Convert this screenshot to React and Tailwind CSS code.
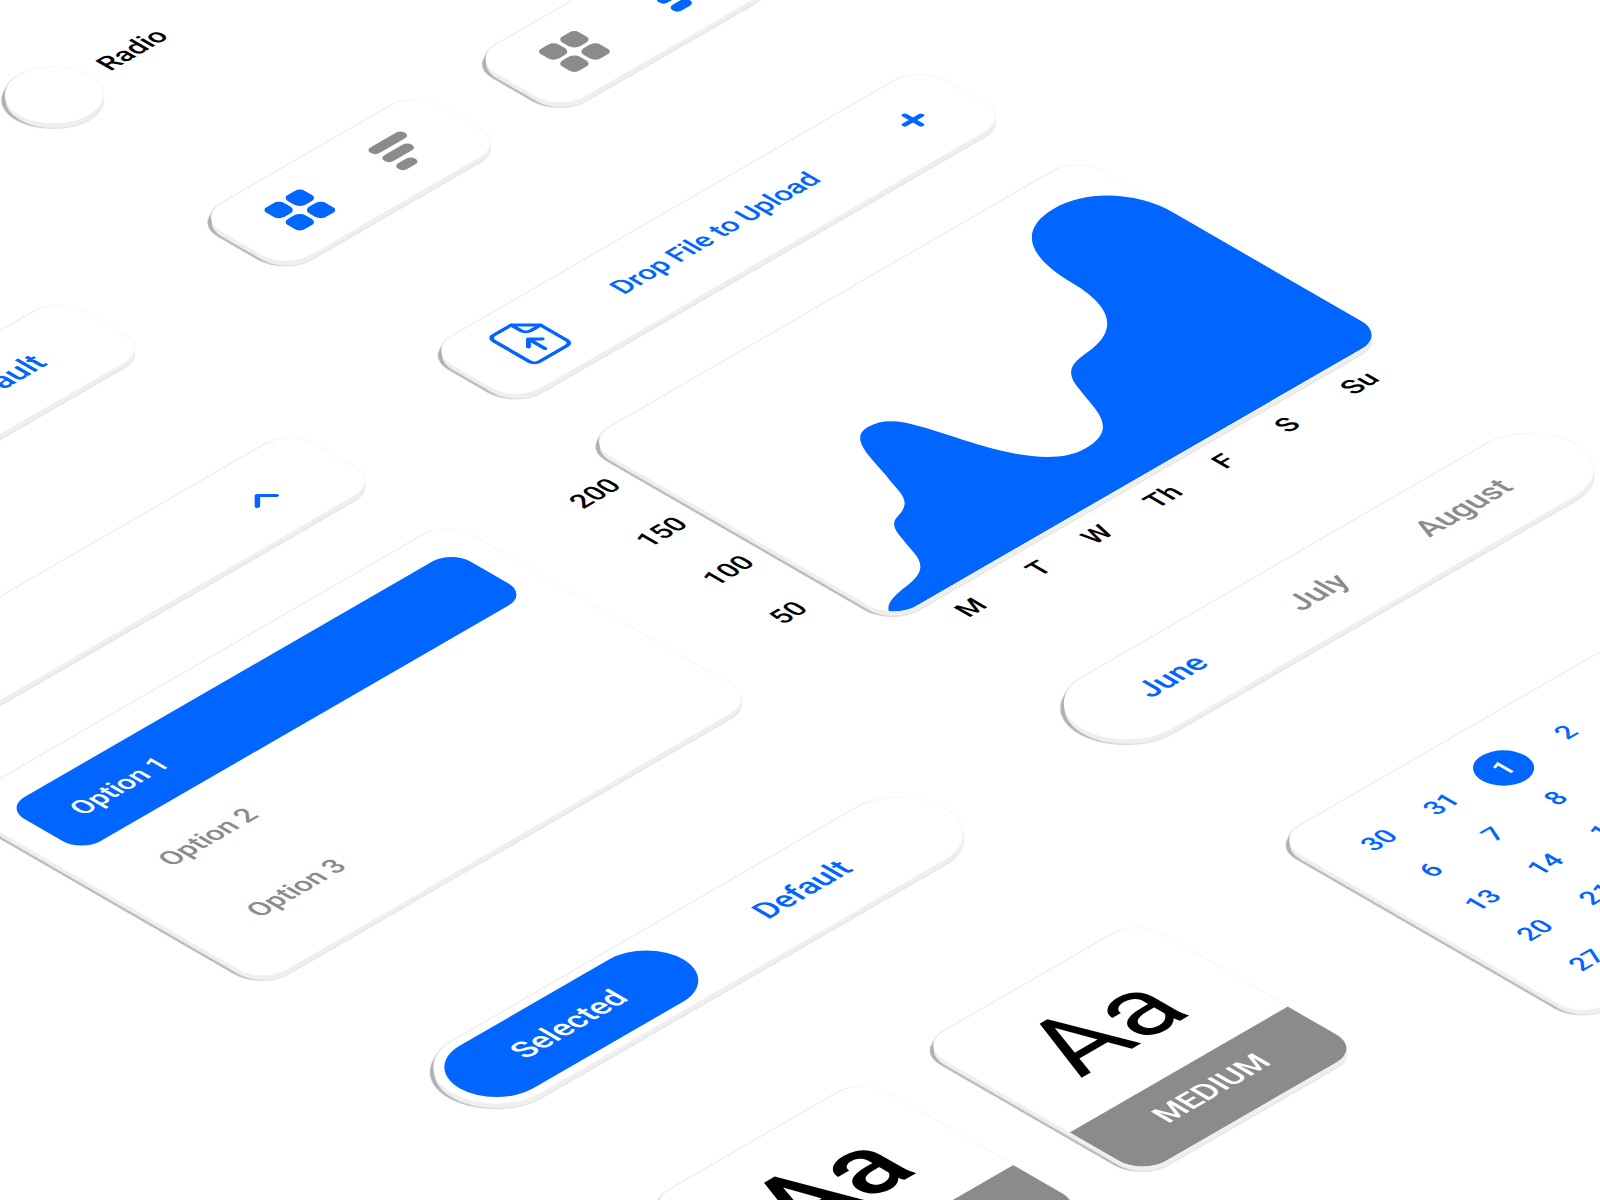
const RAISED =
  "bg-white [box-shadow:-4px_5px_0_#efefef,-5px_6px_1px_#dedede,-7px_3px_1px_#b0b0b0,-1px_-1px_0_#e6e6e6,1px_0_0_#f5f5f5]";

const DAYS = ["M", "T", "W", "Th", "F", "S", "Su"];
const LEVELS = ["200", "150", "100", "50"];
const OPTIONS = ["Option 1", "Option 2", "Option 3"];
const WEEKS = [
  [30, 31, 1, 2, 3, 4, 5],
  [6, 7, 8, 9, 10, 11, 12],
  [13, 14, 15, 16, 17, 18, 19],
  [20, 21, 22, 23, 24, 25, 26],
  [27, 28, 29, 30, 31, 1, 2],
];

function GridIcon() {
  return (
    <svg width="44" height="44" viewBox="0 0 44 44" fill="currentColor" aria-hidden="true">
      <rect x="-.5" y="-.5" width="20.500" height="20.500" rx="7" />
      <rect x="24" y="-.5" width="20.500" height="20.500" rx="7" />
      <rect x="-.5" y="24" width="20.500" height="20.500" rx="7" />
      <rect x="24" y="24" width="20.500" height="20.500" rx="7" />
    </svg>
  );
}

function ListIcon() {
  return (
    <svg width="44" height="44" viewBox="0 0 44 44" fill="currentColor" aria-hidden="true">
      <rect x="2" y="0" width="40" height="11" rx="5.5" />
      <rect x="2" y="16" width="32" height="11" rx="5.5" />
      <rect x="2" y="32" width="20" height="11" rx="5.5" />
    </svg>
  );
}

function FileUpIcon() {
  return (
    <svg
      width="48"
      height="57"
      viewBox="0 0 48 57"
      fill="none"
      stroke="currentColor"
      strokeWidth="4"
      strokeLinecap="round"
      strokeLinejoin="round"
      aria-hidden="true"
    >
      <path d="M29 2H9a6 6 0 0 0-6 6v41a6 6 0 0 0 6 6h31a6 6 0 0 0 6-6V19Z" />
      <path d="M29 2v11a6 6 0 0 0 6 6h11" />
      <path d="M25 45V26M17 34l8-8 8 8" />
    </svg>
  );
}

function PlusIcon() {
  return (
    <svg width="24" height="24" viewBox="0 0 24 24" fill="none" stroke="currentColor" strokeWidth="5" strokeLinecap="round" aria-hidden="true">
      <path d="M12 2.500v19M2.500 12h19" />
    </svg>
  );
}

function ChevronUpIcon() {
  return (
    <svg width="28" height="16" viewBox="0 0 28 16" fill="none" stroke="currentColor" strokeWidth="4.5" strokeLinecap="round" strokeLinejoin="round" aria-hidden="true">
      <path d="M3 14 14 3l11 11" />
    </svg>
  );
}

function ViewSwitch({ active }) {
  const on = "text-[#0066ff]";
  const off = "text-[#8b8b8b]";
  return (
    <div className={`flex h-[103px] w-[252px] items-center justify-between rounded-[28px] px-[45px] ${RAISED}`}>
      <button type="button" aria-label="Grid view" className={active === "grid" ? on : off}>
        <GridIcon />
      </button>
      <button type="button" aria-label="List view" className={active === "list" ? on : off}>
        <ListIcon />
      </button>
    </div>
  );
}

function FontCard({ label, weight }) {
  return (
    <article className={`w-[252px] rounded-[28px] ${RAISED}`}>
      <div className="overflow-hidden rounded-[28px]">
        <div className={`flex h-[174px] items-center justify-center pt-1 text-[110px] leading-none text-black ${weight}`}>Aa</div>
        <div className="flex h-[84px] items-center justify-center bg-[#8b8b8b] pb-2 text-[31px] text-white">{label}</div>
      </div>
    </article>
  );
}

function Chart() {
  return (
    <figure className="relative mt-[79px]">
      <ul className="absolute top-[20px] right-full mr-[15px] w-[54px] text-black">
        {LEVELS.map((level) => (
          <li key={level} className="flex h-[77px] items-center">
            {level}
          </li>
        ))}
      </ul>
      <div className={`h-[356px] rounded-[28px] ${RAISED}`}>
        <div className="h-full overflow-hidden rounded-[28px]">
          <svg className="block h-full w-full" viewBox="0 0 569 356" preserveAspectRatio="none" role="img" aria-label="Activity per day">
            <path
              fill="#0066ff"
              d="M2 352C12 328 40 334 58 326C78 317 78 300 86 281C92 262 98 258 106 255.500C132 248 130 232 140 208C150 178 156 149 178 149C204 149 208 176 218 209C228 246 244 296 282 296C322 296 326 264 338 233C346 210 356 203 379 201C414 198 439 176 440 124C440 68 464 38 504 38C544 38 569 72 569 112V356H0Z"
            />
          </svg>
        </div>
      </div>
      <ul className="absolute top-full left-[45px] mt-[17px] grid grid-cols-[82px_64px_72px_79px_72px_76px_40px] leading-8 text-black">
        {DAYS.map((day) => (
          <li key={day}>{day}</li>
        ))}
      </ul>
    </figure>
  );
}

export default function App() {
  return (
    <main className="relative h-screen overflow-hidden bg-white font-['Roboto',sans-serif] text-[27px] font-medium">
      <div className="absolute top-1/2 left-1/2 -ml-[1839px] flex w-[2124px] origin-top-left items-start gap-[159px] pl-[368px] [transform:matrix(0.866,-0.5,0.866,0.5,0,0)]">
        <section className="w-[569px] shrink-0 pt-[331px]">
          <div className={`flex h-[103px] items-center justify-end rounded-[28px] pr-[73px] ${RAISED}`}>
            <button type="button" className="text-[31px] text-[#0066ff]">Default</button>
          </div>

          <button
            type="button"
            aria-label="Close options"
            aria-expanded="true"
            className={`mt-[163px] flex h-[103px] w-full items-center justify-end rounded-[28px] pr-[70px] text-[#0066ff] ${RAISED}`}
          >
            <ChevronUpIcon />
          </button>

          <div role="listbox" aria-label="Options" className={`mt-[79px] flex h-[356px] flex-col gap-[14px] rounded-[28px] px-[27px] pt-8 ${RAISED}`}>
            {OPTIONS.map((option, index) => (
              <button
                key={option}
                type="button"
                role="option"
                aria-selected={index === 0}
                className={`h-[88px] rounded-[22px] px-[37px] text-left ${index === 0 ? "bg-[#0066ff] text-white" : "text-[#8b8b8b]"}`}
              >
                {option}
              </button>
            ))}
          </div>

          <div className={`mt-[167px] flex h-[103px] rounded-full p-[9px] text-[31px] ${RAISED}`}>
            <button type="button" aria-pressed="true" className="w-[258px] rounded-full bg-[#0066ff] pr-1 text-white">
              Selected
            </button>
            <button type="button" aria-pressed="false" className="flex-1 rounded-full pr-4 text-[#0066ff]">
              Default
            </button>
          </div>

          <div className="mt-[171px] flex justify-between">
            <FontCard label="BOLD" weight="font-medium" />
            <FontCard label="MEDIUM" weight="font-normal" />
          </div>
        </section>

        <section className="w-[569px] shrink-0 pt-[86px]">
          <label className="flex items-center gap-4 text-black">
            <input type="radio" name="sample" className={`h-20 w-20 appearance-none rounded-full ${RAISED}`} />
            Radio
          </label>

          <div className="mt-[165px] flex justify-between">
            <ViewSwitch active="grid" />
            <ViewSwitch active="list" />
          </div>

          <button
            type="button"
            className={`mt-[163px] flex h-[103px] w-full items-center rounded-[28px] pr-[46px] pb-1 pl-[45px] text-[#0066ff] ${RAISED}`}
          >
            <FileUpIcon />
            <span className="ml-[76px] flex-1 text-left">Drop File to Upload</span>
            <PlusIcon />
          </button>

          <Chart />

          <div className={`mt-[167px] grid h-[103px] grid-cols-3 rounded-full pr-11 pl-5 text-[31px] ${RAISED}`}>
            <button type="button" aria-pressed="true" className="text-[#0066ff]">June</button>
            <button type="button" aria-pressed="false" className="text-[#8b8b8b]">July</button>
            <button type="button" aria-pressed="false" className="text-[#8b8b8b]">August</button>
          </div>

          <div className={`mt-[171px] h-[356px] rounded-[28px] px-6 pt-[30px] ${RAISED}`}>
            <table className="table-fixed border-collapse text-[26px] text-[#0066ff]">
              <tbody>
                {WEEKS.map((week, row) => (
                  <tr key={row}>
                    {week.map((day, column) => (
                      <td key={column} className="h-[60px] w-[72px] p-0 text-center">
                        {row === 0 && day === 1 ? (
                          <span className="mx-auto flex size-[50px] items-center justify-center rounded-full bg-[#0066ff] text-white">{day}</span>
                        ) : (
                          day
                        )}
                      </td>
                    ))}
                  </tr>
                ))}
              </tbody>
            </table>
          </div>
        </section>
      </div>
    </main>
  );
}
